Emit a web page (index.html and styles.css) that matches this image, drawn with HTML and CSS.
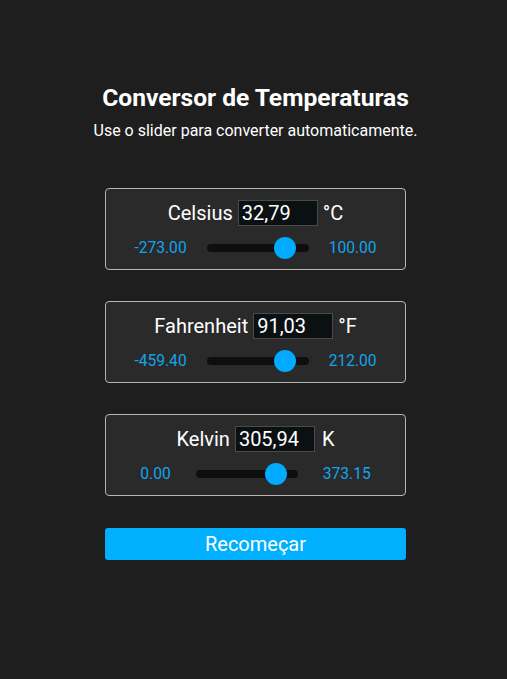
FILE: index.html
```html
<!DOCTYPE html>
<html lang="pt">
<head>
<meta charset="utf-8">
<title>Conversor de Temperaturas</title>
<link rel="stylesheet" href="styles.css">
</head>
<body>
<main class="app">
  <h1 class="title">Conversor de Temperaturas</h1>
  <p class="subtitle">Use o slider para converter automaticamente.</p>

  <section class="card">
    <div class="row-top">
      <span class="name">Celsius</span>
      <input class="value" type="text" value="32,79">
      <span class="unit">°C</span>
    </div>
    <div class="row-slider">
      <span class="lim">-273.00</span>
      <input class="range" type="range" min="-273" max="100" step="0.01" value="42">
      <span class="lim">100.00</span>
    </div>
  </section>

  <section class="card">
    <div class="row-top">
      <span class="name">Fahrenheit</span>
      <input class="value" type="text" value="91,03">
      <span class="unit">°F</span>
    </div>
    <div class="row-slider">
      <span class="lim">-459.40</span>
      <input class="range" type="range" min="-459.4" max="212" step="0.01" value="108">
      <span class="lim">212.00</span>
    </div>
  </section>

  <section class="card">
    <div class="row-top">
      <span class="name">Kelvin</span>
      <input class="value" type="text" value="305,94">
      <span class="unit unit-k">K</span>
    </div>
    <div class="row-slider wide">
      <span class="lim">0.00</span>
      <input class="range" type="range" min="0" max="373.15" step="0.01" value="324">
      <span class="lim">373.15</span>
    </div>
  </section>

  <button class="reset" type="button">Recomeçar</button>
</main>
</body>
</html>
```

FILE: styles.css
```css
* { box-sizing: border-box; }
html, body {
  margin: 0;
  padding: 0;
  background: #1e1e1e;
  height: 100%;
}
body {
  font-family: Roboto, "Liberation Sans", Arial, sans-serif;
  color: #ffffff;
}
.app {
  width: 301px;
  margin: 0 auto;
  padding-top: 83px;
  position: relative;
  left: 2px;
  display: flex;
  flex-direction: column;
  align-items: stretch;
}
.title {
  margin: 0 -20px;
  font-size: 24.6px;
  font-weight: 700;
  line-height: 30px;
  text-align: center;
  white-space: nowrap;
}
.subtitle {
  margin: 8px -20px 0;
  font-size: 16px;
  line-height: 20px;
  text-align: center;
  white-space: nowrap;
}
.card {
  margin-top: 47px;
  background: #2a2a2a;
  border: 1px solid #b5b5b5;
  border-radius: 4px;
  padding: 11px 0 10px;
  display: flex;
  flex-direction: column;
  align-items: center;
  gap: 11px;
}
.card + .card { margin-top: 31px; }
.row-top {
  display: flex;
  align-items: center;
  gap: 5px;
  height: 26px;
  font-size: 20px;
}
.name, .unit { line-height: 26px; }
.unit-k { margin-left: 2px; }
.value {
  width: 80px;
  height: 26px;
  background: #0b1013;
  border: 1px solid #4a4a4a;
  color: #ffffff;
  font-family: Roboto, "Liberation Sans", Arial, sans-serif;
  font-size: 20px;
  padding: 0 3px;
  margin: 0;
  outline: none;
  border-radius: 0;
}
.row-slider {
  display: flex;
  align-items: center;
  gap: 20px;
  height: 22px;
  font-size: 15.6px;
}
.row-slider.wide { gap: 25px; }
.lim { color: #12a4ec; }
.range {
  -webkit-appearance: none;
  appearance: none;
  width: 102px;
  height: 8px;
  margin: 0;
  background: #0e0e0e;
  border-radius: 4px;
  outline: none;
}
.range::-webkit-slider-thumb {
  -webkit-appearance: none;
  appearance: none;
  width: 22px;
  height: 22px;
  border-radius: 50%;
  background: #00aaff;
  border: none;
  cursor: pointer;
}
.range::-moz-range-thumb {
  width: 22px;
  height: 22px;
  border-radius: 50%;
  background: #00aaff;
  border: none;
}
.reset {
  margin-top: 32px;
  height: 32px;
  background: #00b0ff;
  color: #ffffff;
  border: none;
  border-radius: 3px;
  font-family: Roboto, "Liberation Sans", Arial, sans-serif;
  font-size: 20px;
  padding: 0;
}
```
